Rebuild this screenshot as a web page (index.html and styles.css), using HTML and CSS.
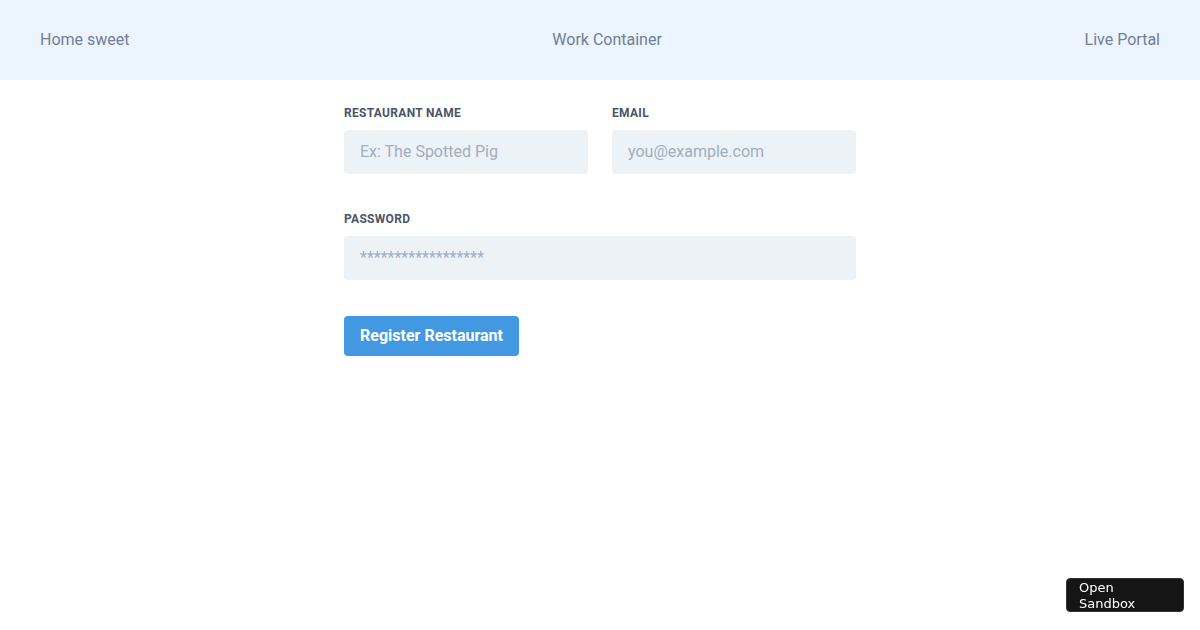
FILE: index.html
```html
<!DOCTYPE html>
<html lang="en">
<head>
  <meta charset="UTF-8">
  <meta name="viewport" content="width=device-width, initial-scale=1.0">
  <title>Register Restaurant</title>
  <link rel="stylesheet" href="styles.css">
</head>
<body>
  <header class="topbar">
    <a href="#" class="nav-link">Home sweet</a>
    <a href="#" class="nav-link">Work Container</a>
    <a href="#" class="nav-link">Live Portal</a>
  </header>
  <main>
    <form class="register-form">
      <div class="row">
        <div class="field">
          <label for="name">Restaurant Name</label>
          <input id="name" type="text" placeholder="Ex: The Spotted Pig">
        </div>
        <div class="field">
          <label for="email">Email</label>
          <input id="email" type="email" placeholder="you@example.com">
        </div>
      </div>
      <div class="row">
        <div class="field">
          <label for="password">Password</label>
          <input id="password" type="password" placeholder="******************">
        </div>
      </div>
      <button type="button" class="btn">Register Restaurant</button>
    </form>
  </main>
  <button class="sandbox-btn" type="button">Open Sandbox</button>
</body>
</html>
```

FILE: styles.css
```css
body {
  margin: 0;
  font-family: Roboto, "Liberation Sans", sans-serif;
  background: #fff;
  color: #4a5568;
}
.topbar {
  box-sizing: border-box;
  display: flex;
  justify-content: space-between;
  align-items: center;
  height: 80px;
  padding: 0 40px 2px;
  background: #ebf4ff;
}
.nav-link {
  color: #718096;
  text-decoration: none;
  font-size: 16px;
}
.register-form {
  width: 512px;
  margin: 0 auto;
  padding-top: 25px;
}
.row {
  display: flex;
  gap: 24px;
  margin-bottom: 37px;
}
.field {
  flex: 1;
  display: flex;
  flex-direction: column;
}
label {
  text-transform: uppercase;
  letter-spacing: 0.025em;
  font-size: 12px;
  line-height: 16px;
  font-weight: 700;
  color: #4a5568;
  margin-bottom: 9px;
}
input {
  box-sizing: border-box;
  width: 100%;
  height: 44px;
  padding: 11px 16px 13px;
  border: none;
  border-radius: 4px;
  background: #edf2f7;
  font-family: inherit;
  font-size: 16px;
  line-height: 20px;
  color: #4a5568;
  outline: none;
}
input::placeholder {
  color: #a0aec0;
}
.btn {
  margin-top: -1px;
  height: 40px;
  padding: 0 16px 2px;
  border: none;
  border-radius: 4px;
  background: #4299e1;
  color: #fff;
  font-family: inherit;
  font-size: 16px;
  font-weight: 700;
  cursor: pointer;
}
.sandbox-btn {
  position: fixed;
  right: 16px;
  bottom: 18px;
  width: 118px;
  height: 34px;
  padding: 1px 12px 0;
  border: 1px solid #333;
  border-radius: 4px;
  background: #151515;
  color: #fff;
  font-family: "DejaVu Sans", sans-serif;
  font-size: 13px;
  line-height: 16px;
  text-align: left;
  word-spacing: 40px;
}
```
